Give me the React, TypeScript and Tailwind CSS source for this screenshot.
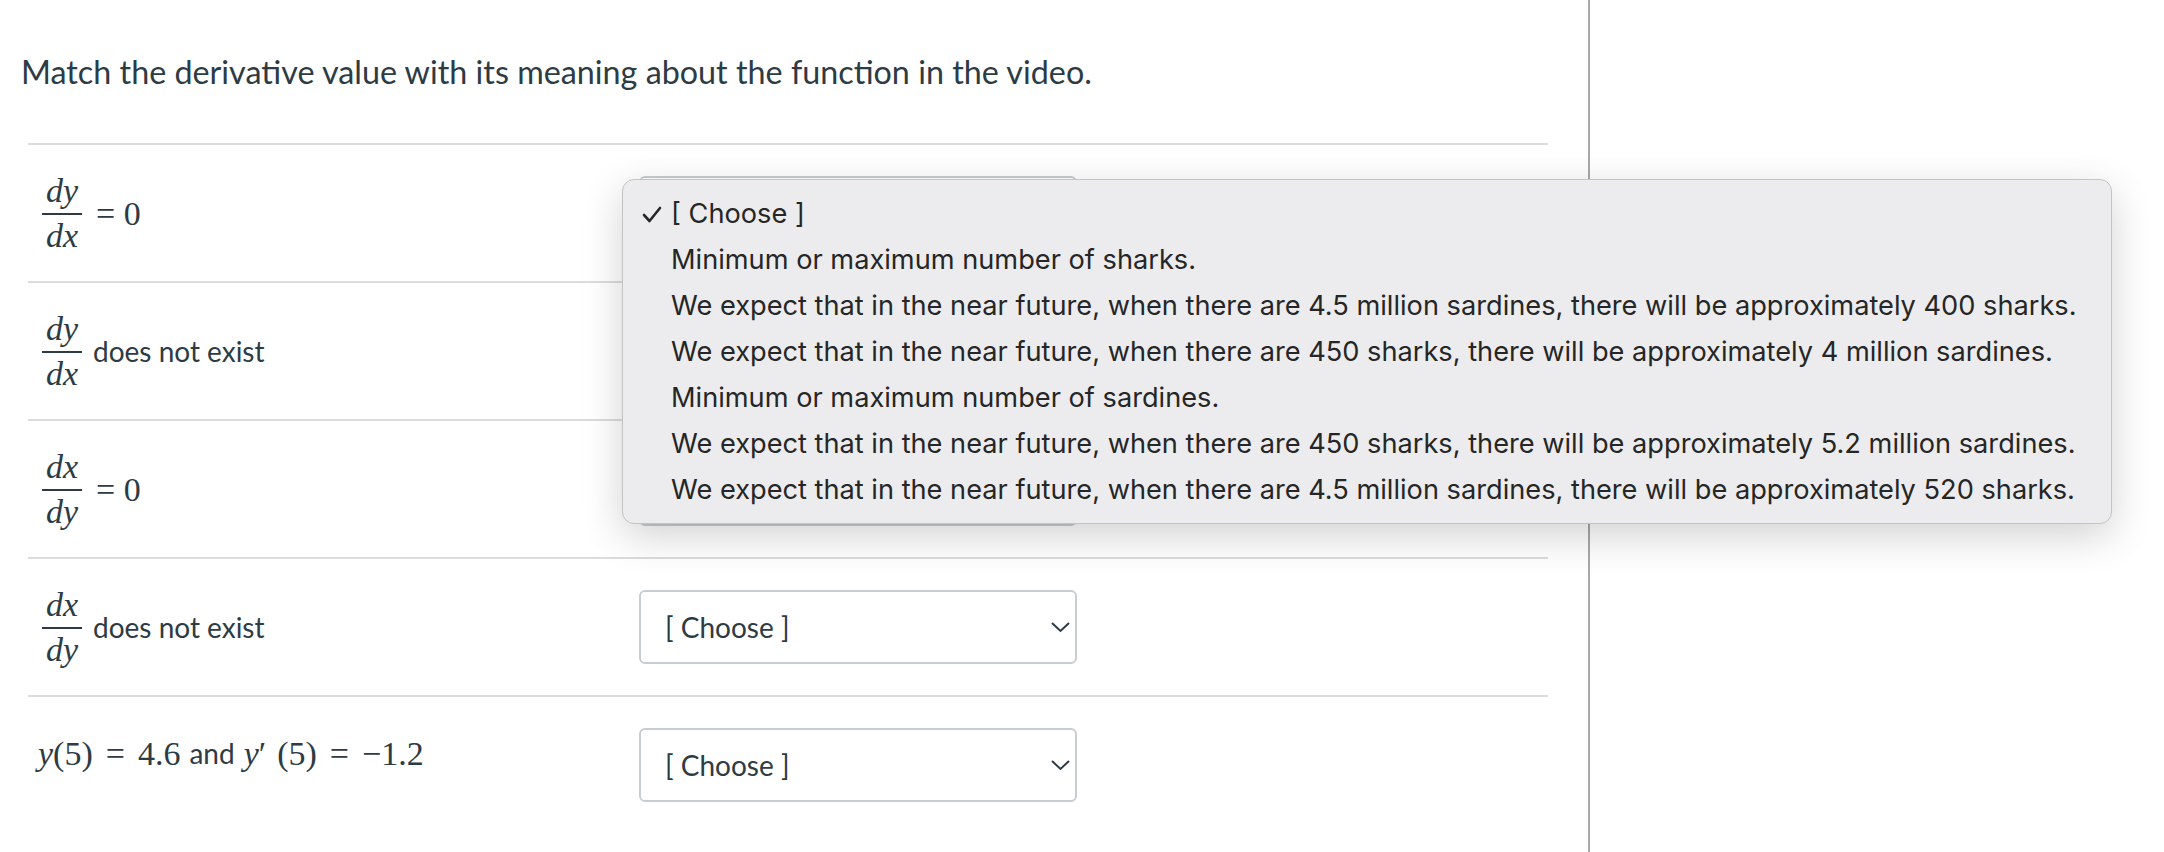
import React from "react";

type Row = { label: React.ReactNode; covered: boolean };

const Frac = ({ top, bottom }: { top: string; bottom: string }) => (
  <span className="inline-flex flex-col items-center font-['Liberation_Serif',serif] italic text-[34px] leading-none">
    <span className="pb-[5px]">{top}</span>
    <span className="h-[2px] w-[40px] bg-[#2d3b45]" />
    <span className="pt-[4px]">{bottom}</span>
  </span>
);

const Serif = ({ children, italic }: { children: React.ReactNode; italic?: boolean }) => (
  <span className={`font-['Liberation_Serif',serif] text-[34px] ${italic ? "italic" : ""}`}>{children}</span>
);

const rows: Row[] = [
  {
    covered: true,
    label: (
      <div className="flex items-center">
        <Frac top="dy" bottom="dx" />
        <span className="ml-[14px]"><Serif>= 0</Serif></span>
      </div>
    ),
  },
  {
    covered: true,
    label: (
      <div className="flex items-center">
        <Frac top="dy" bottom="dx" />
        <span className="ml-[11px]">does not exist</span>
      </div>
    ),
  },
  {
    covered: true,
    label: (
      <div className="flex items-center">
        <Frac top="dx" bottom="dy" />
        <span className="ml-[14px]"><Serif>= 0</Serif></span>
      </div>
    ),
  },
  {
    covered: false,
    label: (
      <div className="flex items-center">
        <Frac top="dx" bottom="dy" />
        <span className="ml-[11px]">does not exist</span>
      </div>
    ),
  },
  {
    covered: false,
    label: (
      <div className="-ml-[4px] mb-[24px] flex items-center whitespace-nowrap">
        <Serif><i>y</i>(5)</Serif>
        <span className="mx-[13px]"><Serif>=</Serif></span>
        <Serif>4.6</Serif>
        <span className="mx-[9px]">and</span>
        <Serif><i>y</i>′</Serif>
        <span className="ml-[11px]"><Serif>(5)</Serif></span>
        <span className="mx-[13px]"><Serif>=</Serif></span>
        <Serif>−1.2</Serif>
      </div>
    ),
  },
];

const options = [
  "[ Choose ]",
  "Minimum or maximum number of sharks.",
  "We expect that in the near future, when there are 4.5 million sardines, there will be approximately 400 sharks.",
  "We expect that in the near future, when there are 450 sharks, there will be approximately 4 million sardines.",
  "Minimum or maximum number of sardines.",
  "We expect that in the near future, when there are 450 sharks, there will be approximately 5.2 million sardines.",
  "We expect that in the near future, when there are 4.5 million sardines, there will be approximately 520 sharks.",
];

const SelectBox = ({ covered }: { covered: boolean }) => (
  <div className="flex h-[74px] w-[438px] items-center justify-between rounded-[6px] border-2 border-[#c7cdd1] bg-white pl-[24px] pr-[5px]">
    {/* the open menu hides the label of the selects under it */}
    <span>{covered ? "" : "[ Choose ]"}</span>
    <svg width="20" height="12" viewBox="0 0 20 12" fill="none">
      <path d="M2 2 L10.5 10 L19 2" stroke="#2d3b45" strokeWidth="2" />
    </svg>
  </div>
);

export default function App() {
  return (
    <div className="relative flex h-[852px] w-full overflow-hidden bg-white font-['Lato',sans-serif] text-[28px] text-[#2d3b45]">
      <div className="w-[1590px] shrink-0 border-r-2 border-[#a8a8a8]">
        <p className="pl-[21px] pt-[48px] text-[32.3px] leading-[48px]">
          Match the derivative value with its meaning about the function in the video.
        </p>
        <div className="ml-[28px] mt-[47px] w-[1520px]">
          {rows.map((row, i) => (
            <div key={i} className="flex h-[138px] items-center border-t-2 border-[#dcdcdc]">
              <div className="w-[611px] pl-[14px]">{row.label}</div>
              <SelectBox covered={row.covered} />
            </div>
          ))}
        </div>
      </div>
      <div className="flex-1" />

      {/* open native select menu */}
      <div className="absolute left-[622px] top-[179px] w-[1490px] rounded-[12px] border border-[#c4c4c4] bg-[#ececee] pb-[10px] pt-[11px] font-['Inter',sans-serif] text-[27.2px] text-[#262626] shadow-[0_12px_40px_rgba(0,0,0,0.18)]">
        {options.map((opt, i) => (
          <div key={i} className="flex h-[46px] items-center whitespace-nowrap">
            <span className="flex w-[48px] justify-end pr-[9px]">
              {i === 0 && (
                <svg width="20" height="17" viewBox="0 0 20 17" fill="none">
                  <path d="M2 9 L7.5 15 L18 2" stroke="#262626" strokeWidth="2.6" strokeLinecap="round" strokeLinejoin="round" />
                </svg>
              )}
            </span>
            <span>{opt}</span>
          </div>
        ))}
      </div>
    </div>
  );
}
